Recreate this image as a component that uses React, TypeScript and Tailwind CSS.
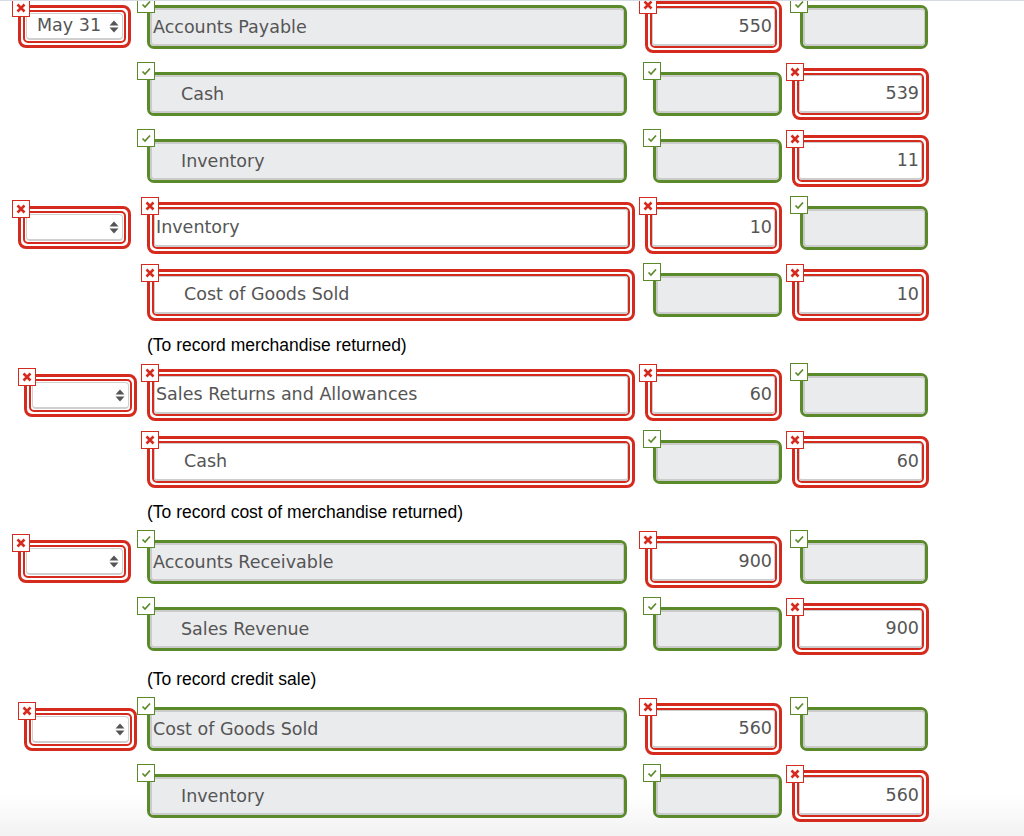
import React from "react";

type Kind = "g" | "r";
type Row =
  | {
      t: "row";
      date?: { text: string; shift: boolean };
      acct: [Kind, string, boolean];
      dr: [Kind, string];
      cr: [Kind, string];
    }
  | { t: "note"; text: string };

const rows: Row[] = [
  { t: "row", date: { text: "May 31", shift: false }, acct: ["g", "Accounts Payable", false], dr: ["r", "550"], cr: ["g", ""] },
  { t: "row", acct: ["g", "Cash", true], dr: ["g", ""], cr: ["r", "539"] },
  { t: "row", acct: ["g", "Inventory", true], dr: ["g", ""], cr: ["r", "11"] },
  { t: "row", date: { text: "", shift: false }, acct: ["r", "Inventory", false], dr: ["r", "10"], cr: ["g", ""] },
  { t: "row", acct: ["r", "Cost of Goods Sold", true], dr: ["g", ""], cr: ["r", "10"] },
  { t: "note", text: "(To record merchandise returned)" },
  { t: "row", date: { text: "", shift: true }, acct: ["r", "Sales Returns and Allowances", false], dr: ["r", "60"], cr: ["g", ""] },
  { t: "row", acct: ["r", "Cash", true], dr: ["g", ""], cr: ["r", "60"] },
  { t: "note", text: "(To record cost of merchandise returned)" },
  { t: "row", date: { text: "", shift: false }, acct: ["g", "Accounts Receivable", false], dr: ["r", "900"], cr: ["g", ""] },
  { t: "row", acct: ["g", "Sales Revenue", true], dr: ["g", ""], cr: ["r", "900"] },
  { t: "note", text: "(To record credit sale)" },
  { t: "row", date: { text: "", shift: true }, acct: ["g", "Cost of Goods Sold", false], dr: ["r", "560"], cr: ["g", ""] },
  { t: "row", acct: ["g", "Inventory", true], dr: ["g", ""], cr: ["r", "560"] },
];

const font = "font-['DejaVu_Sans','Verdana',sans-serif] text-[17.5px] text-[#555555]";

function Badge({ ok, pos }: { ok: boolean; pos: string }) {
  return (
    <div
      className={`absolute z-10 flex h-[18px] w-[18px] items-center justify-center bg-white border ${
        ok ? "border-[#5b8a2a]" : "border-[#d52b1e]"
      } ${pos}`}
    >
      {ok ? (
        <svg width="14" height="14" viewBox="0 0 14 14">
          <polyline points="3.5,7.5 6,10 11,4.5" fill="none" stroke="#5b8a2a" strokeWidth="1.7" />
        </svg>
      ) : (
        <svg width="14" height="14" viewBox="0 0 14 14">
          <path d="M3.5 3.5 L10.5 10.5 M10.5 3.5 L3.5 10.5" stroke="#d52b1e" strokeWidth="2.6" strokeLinecap="butt" />
        </svg>
      )}
    </div>
  );
}

function GreenBox({ text, indent, right, cls }: { text: string; indent?: boolean; right?: boolean; cls: string }) {
  return (
    <div className={`relative mt-[5px] h-[44px] ${cls}`}>
      <div className="h-full rounded-[7px] border-[3px] border-[#5b8a2a] bg-[#eaebed]">
        <div
          className={`flex h-full items-center rounded-[4px] border-t-2 border-l-2 border-b-2 border-r border-[#cbcbcb] ${
            right ? "justify-end pr-[6px]" : indent ? "pl-[29px]" : "pl-[1px]"
          } ${font}`}
        >
          {text}
        </div>
      </div>
      <Badge ok pos="-left-[10px] -top-[10px]" />
    </div>
  );
}

function RedBox({ text, indent, right, cls }: { text: string; indent?: boolean; right?: boolean; cls: string }) {
  return (
    <div className={`relative mt-[1px] h-[52px] ${cls}`}>
      <div className="h-full rounded-[8px] border-[3px] border-[#d52b1e] bg-white p-[2px]">
        <div className="h-full rounded-[5px] border-2 border-[#d52b1e]">
          <div
            className={`flex h-full items-center rounded-[3px] border border-b-2 border-[#cdcdcd] bg-white ${
              right ? "justify-end pr-[2px]" : indent ? "pl-[29px]" : "pl-[1px]"
            } ${font}`}
          >
            {text}
          </div>
        </div>
      </div>
      <Badge ok={false} pos="-left-[6px] -top-[5px]" />
    </div>
  );
}

function DateBox({ text, shift }: { text: string; shift: boolean }) {
  return (
    <div className={`relative w-[113px] ${shift ? "ml-[24px] mt-[6px] h-[43px]" : "ml-[18px] mt-[5px] h-[43px]"}`}>
      <div className="h-full rounded-[8px] border-[3px] border-[#d52b1e] bg-white p-[2px]">
        <div className="h-full rounded-[5px] border-2 border-[#d52b1e] p-[1px]">
          <div className={`flex h-full items-center justify-between rounded-[4px] border border-[#d0d0d0] border-b-2 bg-white pl-[10px] pr-[3px] ${font}`}>
            <span className="leading-none">{text}</span>
            <svg width="10" height="15" viewBox="0 0 10 15">
              <path d="M5 1.5 L9.5 6.5 L0.5 6.5 Z" fill="#555" />
              <path d="M5 13.5 L9.5 8.5 L0.5 8.5 Z" fill="#555" />
            </svg>
          </div>
        </div>
      </div>
      <Badge ok={false} pos="-left-[6px] -top-[6px]" />
    </div>
  );
}

export default function App() {
  return (
    <div className="relative min-h-[836px] w-[1024px] overflow-hidden bg-[linear-gradient(to_bottom,#ffffff_0px,#ffffff_795px,#f2f2f2_836px)]">
      <div className="absolute left-0 right-0 top-0 z-20 h-px bg-[#d7dce4]" />
      <div className="flex flex-col">
        {rows.map((r, i) =>
          r.t === "note" ? (
            <div key={i} className="h-[33px] pl-[147px] font-['Liberation_Sans','Arial',sans-serif] text-[17.5px] leading-[20px] text-black">
              {r.text}
            </div>
          ) : (
            <div key={i} className="flex h-[67px]">
              <div className="w-[140px]">{r.date ? <DateBox text={r.date.text} shift={r.date.shift} /> : null}</div>
              <div className="w-[500px]">
                {r.acct[0] === "g" ? (
                  <GreenBox text={r.acct[1]} indent={r.acct[2]} cls="ml-[7px] w-[480px]" />
                ) : (
                  <RedBox text={r.acct[1]} indent={r.acct[2]} cls="ml-[7px] w-[488px]" />
                )}
              </div>
              <div className="w-[145px]">
                {r.dr[0] === "g" ? (
                  <GreenBox text={r.dr[1]} right cls="ml-[13px] w-[129px]" />
                ) : (
                  <RedBox text={r.dr[1]} right cls="ml-[5px] w-[137px]" />
                )}
              </div>
              <div className="w-[150px]">
                {r.cr[0] === "g" ? (
                  <GreenBox text={r.cr[1]} right cls="ml-[15px] w-[128px]" />
                ) : (
                  <RedBox text={r.cr[1]} right cls="ml-[7px] w-[137px]" />
                )}
              </div>
            </div>
          )
        )}
      </div>
    </div>
  );
}
